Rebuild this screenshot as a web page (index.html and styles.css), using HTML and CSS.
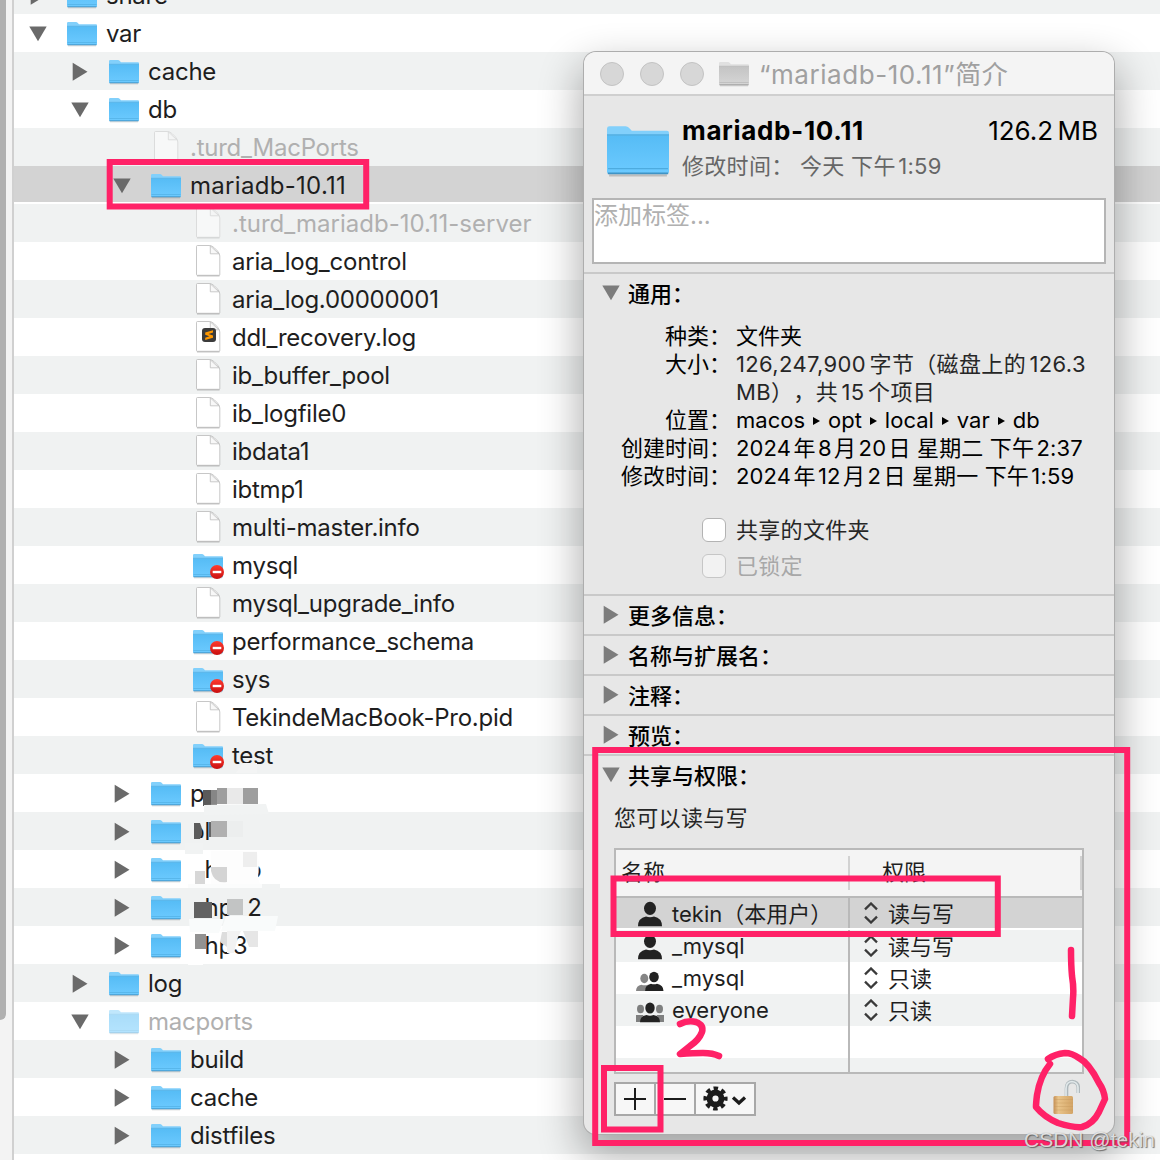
FILE: index.html
```html
<!DOCTYPE html>
<html lang="zh-CN">
<head>
    <meta charset="UTF-8">
    <meta name="viewport" content="width=device-width, initial-scale=1.0">
    <title>mariadb-10.11 简介</title>
    <link rel="stylesheet" href="styles.css">
</head>
<body>
    <!-- Shared icons -->
    <svg class="sprite" width="0" height="0">
        <defs>
            <linearGradient id="folderFill" x1="0" y1="0" x2="0" y2="1">
                <stop offset="0" stop-color="#56bcf5"/>
                <stop offset="1" stop-color="#6ccaff"/>
            </linearGradient>
            <linearGradient id="redFill" x1="0" y1="0" x2="0" y2="1">
                <stop offset="0" stop-color="#ff3b2f"/>
                <stop offset="1" stop-color="#c90f0f"/>
            </linearGradient>
            <linearGradient id="brass" x1="0" y1="0" x2="1" y2="0">
                <stop offset="0" stop-color="#c58f55"/>
                <stop offset="0.25" stop-color="#e9c48a"/>
                <stop offset="1" stop-color="#d3a466"/>
            </linearGradient>
        </defs>
        <symbol id="folder" viewBox="0 0 30 26">
            <path d="M1 24.800h28" stroke="#000" stroke-opacity=".18"/>
            <path d="M0 2.200Q0 1 1.200 1H9q1 0 1.600.8L12 3.200h17q1 0 1 1V23H0z" fill="#82d0fb"/>
            <path d="M0 5.500h30v17.500q0 1-1 1H1q-1 0-1-1z" fill="url(#folderFill)"/>
            <path d="M0 5.300h30" stroke="#4faee2" stroke-width=".7"/>
            <path d="M.5 21.500h29" stroke="#4dabdf" stroke-width=".6"/>
            <path d="M.4 23.800h29.200" stroke="#3f94c6" stroke-width=".9"/>
        </symbol>
        <symbol id="file" viewBox="0 0 30 34">
            <path d="M4 31.700h22.500" stroke="#000" stroke-opacity=".25" stroke-width="1.500"/>
            <path d="M3.500 2.500q0-1 1-1H16q3 0 5.500 2.500l3 3q2.300 2.500 2.300 5v18.500q0 .8-.8.8H4.300q-.8 0-.8-.8z" fill="#fff" stroke="#b9b9b9" stroke-width=".8"/>
            <path d="M17.300 1.800v8h8.500z" fill="#f8f8f8" stroke="#bdbdbd" stroke-width=".8"/>
        </symbol>
        <symbol id="sublime" viewBox="0 0 14 14">
            <rect width="14" height="14" rx="3" fill="#3b3b3b"/>
            <path d="M11 2.200v2.400L6.500 6l4.500 1.500v2.200L3.200 12V9.700l4.200-1.400-4.200-1.500V4.500z" fill="#ff9800"/>
        </symbol>
        <symbol id="denied" viewBox="0 0 14 14">
            <circle cx="7" cy="7" r="7" fill="url(#redFill)"/>
            <rect x="2.700" y="5.800" width="8.600" height="2.400" fill="#fff"/>
        </symbol>
        <symbol id="down" viewBox="0 0 20 20"><path d="M1.300 2.500h17.400L10 17.300z"/></symbol>
        <symbol id="right" viewBox="0 0 20 20"><path d="M2.700.8v18L17.500 9.800z"/></symbol>
        <symbol id="user" viewBox="0 0 28 28">
            <ellipse cx="14" cy="8.300" rx="6" ry="6.600"/>
            <path d="M2 26.300q0-8.300 8-9.800 4 1.500 8 0 8 1.500 8 9.800z"/>
        </symbol>
        <symbol id="group2" viewBox="0 0 28 28">
            <g opacity=".55">
                <ellipse cx="8.300" cy="13.500" rx="4" ry="4.700"/>
                <path d="M0 26q0-5.300 5.500-6.300 2.800 1 6.500 0L9 26z"/>
            </g>
            <ellipse cx="18" cy="12" rx="4.800" ry="5.300"/>
            <path d="M9 26q0-6 6-7.300 3 1.300 6 0 6.500 1.300 6.500 7.300z"/>
        </symbol>
        <symbol id="group3" viewBox="0 0 28 28">
            <g opacity=".55">
                <ellipse cx="4.500" cy="12" rx="3.500" ry="4.200"/>
                <ellipse cx="23.500" cy="12" rx="3.500" ry="4.200"/>
                <path d="M0 25v-7h7.500L4 25zM28 25v-7h-7.500l3.500 7z"/>
            </g>
            <ellipse cx="14" cy="11" rx="4.700" ry="5.500"/>
            <path d="M4 25.200q0-6 6.500-7.200 3.500 1.300 7 0 6.500 1.200 6.500 7.200z"/>
        </symbol>
        <symbol id="updown" viewBox="0 0 14 22">
            <path d="M1 7.300 7 1.500l6 5.800M1 14.700l6 5.800 6-5.800" fill="none" stroke="#3a3a3a" stroke-width="2.300"/>
        </symbol>
    </svg>

    <div class="finder">
        <div class="edge"><div class="thumb"></div></div>
        <div class="tree">
            <div class="row l0"><svg class="tri"><use href="#right"/></svg><svg class="icon"><use href="#folder"/></svg><span>share</span></div>
            <div class="row l0"><svg class="tri"><use href="#down"/></svg><svg class="icon"><use href="#folder"/></svg><span>var</span></div>
            <div class="row l1"><svg class="tri"><use href="#right"/></svg><svg class="icon"><use href="#folder"/></svg><span>cache</span></div>
            <div class="row l1"><svg class="tri"><use href="#down"/></svg><svg class="icon"><use href="#folder"/></svg><span>db</span></div>
            <div class="row l2 dim"><i class="tri"></i><svg class="icon page"><use href="#file"/></svg><span>.turd_MacPorts</span></div>
            <div class="row l2 selected"><svg class="tri"><use href="#down"/></svg><svg class="icon"><use href="#folder"/></svg><span class="loose">mariadb-10.11</span></div>
            <div class="row l3 dim"><i class="tri"></i><svg class="icon page"><use href="#file"/></svg><span class="server">.turd_mariadb-10.11-server</span></div>
            <div class="row l3"><i class="tri"></i><svg class="icon page"><use href="#file"/></svg><span>aria_log_control</span></div>
            <div class="row l3"><i class="tri"></i><svg class="icon page"><use href="#file"/></svg><span>aria_log.00000001</span></div>
            <div class="row l3"><i class="tri"></i><svg class="icon page"><use href="#file"/><use href="#sublime" x="9" y="8" width="14" height="14"/></svg><span>ddl_recovery.log</span></div>
            <div class="row l3"><i class="tri"></i><svg class="icon page"><use href="#file"/></svg><span>ib_buffer_pool</span></div>
            <div class="row l3"><i class="tri"></i><svg class="icon page"><use href="#file"/></svg><span>ib_logfile0</span></div>
            <div class="row l3"><i class="tri"></i><svg class="icon page"><use href="#file"/></svg><span>ibdata1</span></div>
            <div class="row l3"><i class="tri"></i><svg class="icon page"><use href="#file"/></svg><span>ibtmp1</span></div>
            <div class="row l3"><i class="tri"></i><svg class="icon page"><use href="#file"/></svg><span>multi-master.info</span></div>
            <div class="row l3"><i class="tri"></i><svg class="icon"><use href="#folder"/><use href="#denied" x="17" y="12" width="14" height="14"/></svg><span>mysql</span></div>
            <div class="row l3"><i class="tri"></i><svg class="icon page"><use href="#file"/></svg><span>mysql_upgrade_info</span></div>
            <div class="row l3"><i class="tri"></i><svg class="icon"><use href="#folder"/><use href="#denied" x="17" y="12" width="14" height="14"/></svg><span>performance_schema</span></div>
            <div class="row l3"><i class="tri"></i><svg class="icon"><use href="#folder"/><use href="#denied" x="17" y="12" width="14" height="14"/></svg><span>sys</span></div>
            <div class="row l3"><i class="tri"></i><svg class="icon page"><use href="#file"/></svg><span>TekindeMacBook-Pro.pid</span></div>
            <div class="row l3"><i class="tri"></i><svg class="icon"><use href="#folder"/><use href="#denied" x="17" y="12" width="14" height="14"/></svg><span>test</span></div>
            <div class="row l2"><svg class="tri"><use href="#right"/></svg><svg class="icon"><use href="#folder"/></svg><span>p</span></div>
            <div class="row l2"><svg class="tri"><use href="#right"/></svg><svg class="icon"><use href="#folder"/></svg><span>pl</span></div>
            <div class="row l2"><svg class="tri"><use href="#right"/></svg><svg class="icon"><use href="#folder"/></svg><span class="spaced">ph p</span></div>
            <div class="row l2"><svg class="tri"><use href="#right"/></svg><svg class="icon"><use href="#folder"/></svg><span class="spaced2">php 2</span></div>
            <div class="row l2"><svg class="tri"><use href="#right"/></svg><svg class="icon"><use href="#folder"/></svg><span>php3</span></div>
            <div class="row l1"><svg class="tri"><use href="#right"/></svg><svg class="icon"><use href="#folder"/></svg><span>log</span></div>
            <div class="row l1 dim"><svg class="tri"><use href="#down"/></svg><svg class="icon"><use href="#folder"/></svg><span>macports</span></div>
            <div class="row l2"><svg class="tri"><use href="#right"/></svg><svg class="icon"><use href="#folder"/></svg><span>build</span></div>
            <div class="row l2"><svg class="tri"><use href="#right"/></svg><svg class="icon"><use href="#folder"/></svg><span>cache</span></div>
            <div class="row l2"><svg class="tri"><use href="#right"/></svg><svg class="icon"><use href="#folder"/></svg><span>distfiles</span></div>
        </div>
    </div>

    <!-- Mosaic over the hidden folder names -->
    <svg class="mosaic" viewBox="180 760 110 210" width="110" height="210">
        <path d="M243 763h14v10h-21z" fill="#f3f4f4"/>
        <path d="M203 790h9v16h-9z" fill="#5a5a5a"/><path d="M211 790h6v16h-6z" fill="#868686"/><path d="M217 788h10v16h-10z" fill="#9e9e9e"/>
        <path d="M227 788h16v16h-16z" fill="#e9e9e9"/><path d="M243 788h15v16h-15z" fill="#9e9e9e"/>
        <path d="M204 805l62-1 3 10-65 1z" fill="#f1f3f3"/>
        <path d="M188 818h8v24h-8zM188 838h17v6h-17z" fill="#f0f2f2"/>
        <path d="M194 823h6q4 8 0 16h-6z" fill="#5c5c5c"/><path d="M209 822h4v15h-4z" fill="#666"/><path d="M211 821h16v16h-16z" fill="#b0b0b0"/><path d="M227 821h16v16h-16z" fill="#eceeee"/>
        <path d="M185 843h18v11h-18z" fill="#f1f3f3"/><path d="M188 854h17v34h-17z" fill="#fff"/>
        <path d="M211 851h46l2 12-1 16 4 9h-51z" fill="#fdfdfd"/><path d="M243 852h14v15h-14z" fill="#eee"/>
        <path d="M195 871h10v15h-10z" fill="#d7d7d7"/><path d="M211 867h16v15q-13 2-16-11z" fill="#d4d4d4"/>
        <path d="M262 876h6v8h-6z" fill="#fff"/><path d="M188 884h80v4H188z" fill="#fbfcfc"/><path d="M262 884h18v6h-18z" fill="#f1f3f3"/>
        <path d="M188 890h8v32h-8z" fill="#f0f2f2"/><path d="M194 902h18v16h-18z" fill="#626262"/>
        <path d="M227 899h16v16h-16z" fill="#c2c4c4"/>
        <path d="M189 919h35l-5 14h-29z" fill="#f9fbfb"/><path d="M226 916h52l-3 15h-54z" fill="#f9fbfb"/>
        <path d="M188 932h18v30h-18z" fill="#fff"/><path d="M195 934h11v15h-11z" fill="#929292"/><path d="M222 932h5v15l-7-5z" fill="#ddd"/><path d="M227 931h14l-3 6-4 16h-7z" fill="#f2f2f2"/><path d="M243 931h15v16h-9z" fill="#e6e6e6"/>
        <path d="M188 962h15v3h-15z" fill="#fff"/>
    </svg>

    <div class="window">
        <div class="titlebar">
            <i class="light"></i><i class="light"></i><i class="light"></i>
            <svg class="icon gray"><use href="#folder"/></svg>
            <span>“mariadb-10.11”简介</span>
        </div>

        <div class="summary">
            <svg class="big-icon"><use href="#folder"/></svg>
            <div class="summary-text">
                <div class="summary-top"><b>mariadb-10.11</b><span class="size">126.2 MB</span></div>
                <div class="modified">修改时间： 今天 <span class="tight">下午 1:59</span></div>
            </div>
        </div>
        <div class="tags">添加标签...</div>

        <div class="section general">
            <div class="head"><svg class="tri"><use href="#down"/></svg>通用：</div>
            <div class="info">
                <div class="key">种类：</div><div>文件夹</div>
                <div class="key">大小：</div><div class="bytes">126,247,900 字节（磁盘上的 126.3<br>MB），共 15 个项目</div>
                <div class="key">位置：</div><div class="path">macos<i></i>opt<i></i>local<i></i>var<i></i>db</div>
                <div class="key">创建时间：</div><div class="date"><span class="tight">2024 年 8 月 20 日</span> 星期二 <span class="tight">下午 2:37</span></div>
                <div class="key">修改时间：</div><div class="date"><span class="tight">2024 年 12 月 2 日</span> 星期一 <span class="tight">下午 1:59</span></div>
            </div>
            <div class="check"><i class="box"></i><span>共享的文件夹</span></div>
            <div class="check off"><i class="box"></i><span>已锁定</span></div>
        </div>
        <div class="section"><div class="head"><svg class="tri"><use href="#right"/></svg>更多信息：</div></div>
        <div class="section"><div class="head"><svg class="tri"><use href="#right"/></svg>名称与扩展名：</div></div>
        <div class="section"><div class="head"><svg class="tri"><use href="#right"/></svg>注释：</div></div>
        <div class="section"><div class="head"><svg class="tri"><use href="#right"/></svg>预览：</div></div>
        <div class="section">
            <div class="head"><svg class="tri"><use href="#down"/></svg>共享与权限：</div>
            <div class="note">您可以读与写</div>
            <div class="table">
                <div class="thead"><div class="c1"><span>名称</span></div><div class="c2"><span>权限</span></div></div>
                <div class="tr on"><div class="c1"><svg class="who"><use href="#user"/></svg><span>tekin（本用户）</span></div><div class="c2"><svg class="ud"><use href="#updown"/></svg><span>读与写</span></div></div>
                <div class="tr"><div class="c1"><svg class="who"><use href="#user"/></svg>_mysql</div><div class="c2"><svg class="ud"><use href="#updown"/></svg><span>读与写</span></div></div>
                <div class="tr"><div class="c1"><svg class="who"><use href="#group2"/></svg>_mysql</div><div class="c2"><svg class="ud"><use href="#updown"/></svg><span>只读</span></div></div>
                <div class="tr"><div class="c1"><svg class="who"><use href="#group3"/></svg>everyone</div><div class="c2"><svg class="ud"><use href="#updown"/></svg><span>只读</span></div></div>
                <div class="tr"><div class="c1"></div><div class="c2"></div></div>
                <div class="tr last"><div class="c1"></div><div class="c2"></div></div>
            </div>
            <div class="footer">
                <div class="buttons">
                    <div class="btn"><svg width="24" height="24"><path d="M1 12h22M12 1v22"/></svg></div>
                    <div class="btn"><svg width="24" height="24"><path d="M1 12h22"/></svg></div>
                    <div class="btn wide">
                        <svg width="44" height="26" viewBox="0 0 44 26">
                            <circle cx="12.500" cy="12.500" r="6" stroke-width="5.800"/>
                            <circle cx="12.500" cy="12.500" r="10" stroke-width="4.200" stroke-dasharray="4.400 3.454" stroke-dashoffset="2.200"/>
                            <path d="m30 11.500 6 5.500 6-5.500" stroke-width="3.300"/>
                        </svg>
                    </div>
                </div>
                <svg class="lock" width="28" height="36" viewBox="0 0 28 36">
                    <path d="M14.500 18V9.500q0-6.500 5.800-7 5.700.5 6 6V14" fill="none" stroke="#aeb7bb" stroke-width="3.600"/>
                    <path d="M14 18V9.500q0-6.500 6-7 5.500.5 6 6V14" fill="none" stroke="#e1e8ea" stroke-width="1.700"/>
                    <rect x="1.500" y="17" width="19.500" height="18" rx="1.500" fill="url(#brass)"/>
                    <path d="M2 20.500h19M2 24h19M2 27.500h19M2 31h19" stroke="#c4955a" stroke-opacity=".35"/>
                </svg>
            </div>
        </div>
    </div>

    <!-- Hand-drawn marks -->
    <svg class="marks" width="1160" height="1160">
        <rect x="109.700" y="162" width="256.500" height="44.500"/>
        <rect x="595.200" y="750" width="532" height="393"/>
        <rect x="613.500" y="878.500" width="384.300" height="55.500"/>
        <rect x="604" y="1068" width="56.500" height="61.500"/>
        <g class="pen">
            <path d="M680 1024q8-4 16-2 8 3 6 10-3 8-12 14l-10 8q14-1 23-1 10 0 16 3"/>
            <path d="M1071 950q0 15 1 26 2 12 1 22l-1 18"/>
            <path d="M1050 1064q-10 12-13 31-1 8-1 12 8 10 22 16 16 5 24 4 11-3 17-15l6-13q-1-9-6-16-10-20-20-25-7-5-14-5-10 1-17 6"/>
        </g>
    </svg>
    <div class="watermark">CSDN @tekin</div>
</body>
</html>
```
FILE: styles.css
```css
* {
    margin: 0;
    padding: 0;
    box-sizing: border-box;
}

body {
    position: relative;
    width: 1160px;
    height: 1160px;
    overflow: hidden;
    background: #fff;
    color: #1e1e1e;
    font-family: Inter, "Noto Sans CJK SC", sans-serif;
    font-size: 22px;
}

.sprite {
    position: absolute;
}

svg {
    flex: none;
}

/* Finder list */
.finder {
    display: flex;
    height: 1160px;
    overflow: hidden;
}

.edge {
    width: 14px;
    background: #f3f3f3;
    border-right: 2px solid #d0d0d0;
}

.thumb {
    width: 6px;
    height: 1020px;
    background: #b0b0b0;
    border-radius: 0 0 6px 0;
}

.tree {
    flex: 1;
    margin-top: -24px;
}

.row {
    display: flex;
    align-items: center;
    height: 38px;
    font-size: 24px;
    font-weight: 420;
    white-space: nowrap;
}

.row:nth-child(odd) {
    background: #f0f2f2;
}

.row.selected {
    background: #d3d3d3;
    border-bottom: 2px solid #fff;
}

.row span {
    margin-left: 9px;
    letter-spacing: -0.25px;
}

.row .loose {
    padding-top: 2px;
    letter-spacing: 0.3px;
}

.row .server {
    letter-spacing: 0;
}

.row .spaced {
    word-spacing: 22px;
}

.row .spaced2 {
    word-spacing: 8px;
}

.l0 { padding-left: 14px; }
.l1 { padding-left: 56px; }
.l2 { padding-left: 98px; }
.l3 { padding-left: 140px; }

.tri {
    width: 20px;
    height: 20px;
    flex: none;
    fill: #6a6a6a;
}

.icon {
    width: 30px;
    height: 26px;
    margin-left: 19px;
    overflow: visible;
}

.row .tri,
.row .icon {
    margin-top: 2px;
}

.row .page {
    height: 34px;
    margin-top: 0;
}

.row.selected .icon,
.row.selected .tri {
    margin-top: 4px;
}

.dim span {
    color: #b0b0b0;
}

.dim .icon {
    opacity: 0.5;
}

.mosaic {
    position: absolute;
    left: 180px;
    top: 760px;
}

/* Info window */
.window {
    position: absolute;
    left: 584px;
    top: 52px;
    width: 530px;
    height: 1082px;
    background: #e7e7e7;
    border-radius: 12px;
    box-shadow: 0 0 0 1px #adadad, 0 18px 42px 4px rgba(0, 0, 0, 0.32);
    color: #000;
}

.titlebar {
    display: flex;
    align-items: center;
    height: 44px;
    padding-left: 16px;
    background: #f4f4f4;
    border-bottom: 2px solid #cfcfcf;
    border-radius: 12px 12px 0 0;
    color: #a0a0a0;
    font-size: 26px;
    letter-spacing: 0.55px;
    white-space: nowrap;
}

.titlebar span {
    margin-left: 10px;
    padding-bottom: 1px;
}

.light {
    width: 24px;
    height: 24px;
    margin: 2px 16px 0 0;
    border: 1px solid #c3c3c3;
    border-radius: 50%;
    background: #d7d7d7;
}

.icon.gray {
    margin: 2px 0 0 -1px;
    filter: grayscale(1) brightness(1.15);
}

.summary {
    display: flex;
    height: 102px;
    padding: 20px 16px 0 23px;
}

.big-icon {
    width: 62px;
    height: 54px;
    margin-top: 8px;
}

.summary-text {
    flex: 1;
    margin-left: 13px;
    white-space: nowrap;
}

.summary-top {
    display: flex;
    justify-content: space-between;
    height: 32px;
    line-height: 30px;
    font-size: 26px;
}

.summary-top b {
    font-weight: 700;
    letter-spacing: 0.65px;
}

.size {
    word-spacing: -3px;
}

.modified {
    height: 34px;
    line-height: 36px;
    color: #666;
    letter-spacing: 0.3px;
}

.tight {
    word-spacing: -4px;
}

.tags {
    height: 66px;
    margin: 0 8px;
    border: 2px solid #b5b5b5;
    background: #fff;
    color: #b0b0b0;
    font-size: 24px;
    line-height: 32px;
}

.section {
    border-top: 2px solid #c9c9c9;
}

.general {
    height: 322px;
    margin-top: 8px;
}

.head {
    display: flex;
    align-items: center;
    height: 38px;
    padding: 0 0 2px 17px;
    font-weight: 500;
}

.head .tri {
    margin: 2px 7px 0 0;
    fill: #7c7c7c;
}

.info {
    display: grid;
    grid-template-columns: 147px 1fr;
    column-gap: 5px;
    margin-top: 10px;
    line-height: 28px;
    white-space: nowrap;
}

.key {
    text-align: right;
}

.bytes {
    color: #262626;
    letter-spacing: 0.35px;
    word-spacing: -3px;
    text-spacing-trim: space-all;
}

.date {
    letter-spacing: 0.15px;
}

.path i {
    display: inline-block;
    margin: 0 8px 3px 8px;
    border-left: 7px solid #000;
    border-top: 4px solid transparent;
    border-bottom: 4px solid transparent;
}

.check {
    display: flex;
    align-items: center;
    height: 36px;
    padding-left: 118px;
    color: #262626;
    letter-spacing: 0.3px;
}

.check span {
    padding-bottom: 4px;
}

.info + .check {
    margin-top: 22px;
}

.box {
    width: 24px;
    height: 24px;
    margin-right: 10px;
    border: 1px solid #b3b3b3;
    border-radius: 6px;
    background: #fff;
}

.off {
    color: #a8a8a8;
}

.off .box {
    background: #f2f2f2;
    border-color: #c6c6c6;
}

.note {
    height: 54px;
    padding: 8px 0 0 30px;
    line-height: 32px;
    color: #262626;
    letter-spacing: 0.3px;
}

.table {
    width: 470px;
    height: 226px;
    margin-left: 30px;
    overflow: hidden;
    border: 2px solid #b9b9b9;
    background: #fff;
    color: #1e1e1e;
}

.thead {
    display: flex;
    align-items: center;
    height: 48px;
    background: #f4f4f4;
    border-bottom: 2px solid #b9b9b9;
}

.thead .c1 {
    padding-left: 5px;
    border-right: 2px solid #d2d2d2;
}

.thead .c2 {
    padding-left: 32px;
    border-right: 2px solid #d2d2d2;
}

.thead .c1,
.thead .c2 {
    height: 34px;
}

.thead .c1 span,
.thead .c2 span {
    padding-bottom: 7px;
}

.c1 {
    display: flex;
    align-items: center;
    width: 234px;
    height: 100%;
    border-right: 2px solid #b9b9b9;
}

.c2 {
    display: flex;
    align-items: center;
    flex: 1;
    padding-left: 14px;
}

.tr span {
    padding-bottom: 3px;
}

.tr {
    display: flex;
    height: 32px;
    white-space: nowrap;
}

.tr:nth-child(odd) {
    background: #f0f2f2;
}

.tr.on {
    background: #d3d3d3;
    border-bottom: 2px solid #fff;
}

.who {
    width: 28px;
    height: 28px;
    margin: 2px 8px 0 20px;
    fill: #222;
}

.ud {
    width: 14px;
    height: 22px;
    margin: 0 10px 0 0;
}

.footer {
    display: flex;
    align-items: flex-start;
    padding: 8px 0 0 30px;
}

.buttons {
    display: flex;
    height: 34px;
    border: 2px solid #a8a8a8;
    background: #f7f7f7;
}

.btn {
    display: flex;
    align-items: center;
    justify-content: center;
    width: 40px;
    border-right: 2px solid #a8a8a8;
    fill: none;
    stroke: #1c1c1c;
    stroke-width: 2;
}

.btn.wide {
    width: 58px;
    border-right: 0;
}

.lock {
    margin: -3px 0 0 296px;
}

/* Marks on top of everything */
.marks {
    position: absolute;
    left: 0;
    top: 0;
    fill: none;
    stroke: #ff2167;
    stroke-width: 6;
}

.pen {
    stroke-width: 6.5;
    stroke-linecap: round;
    stroke-linejoin: round;
}

.watermark {
    position: absolute;
    left: 1024px;
    top: 1125px;
    color: rgba(255, 255, 255, 0.75);
    font-family: "Liberation Sans", sans-serif;
    font-size: 21px;
    line-height: 30px;
    text-shadow: 1px 1px 1px rgba(70, 70, 70, 0.7), 0 0 1px rgba(90, 90, 90, 0.6);
    white-space: nowrap;
}
```
